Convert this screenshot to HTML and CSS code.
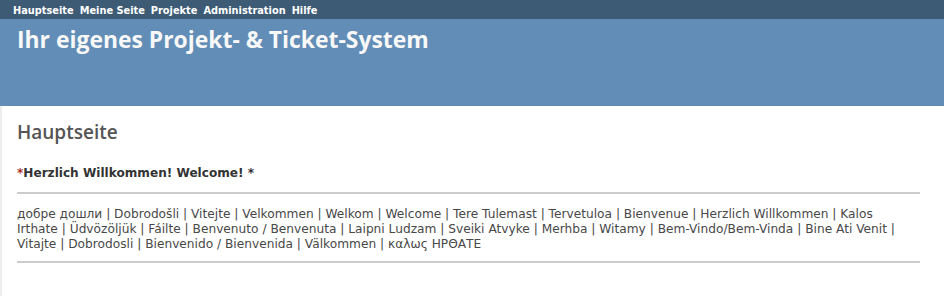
FILE: index.html
```html
<!DOCTYPE html>
<html lang="de">
<head>
<meta charset="utf-8">
<title>Hauptseite</title>
<link rel="stylesheet" href="styles.css">
</head>
<body>
<div class="top-menu">
  <ul class="menu">
    <li><a href="#">Hauptseite</a></li>
    <li><a href="#">Meine Seite</a></li>
    <li><a href="#">Projekte</a></li>
    <li><a href="#">Administration</a></li>
    <li><a href="#">Hilfe</a></li>
  </ul>
</div>
<div class="header">
  <h1 class="site-title">Ihr eigenes Projekt- &amp; Ticket-System</h1>
</div>
<div class="main">
  <div class="content">
    <h2 class="page-title">Hauptseite</h2>
    <div class="wiki">
      <p class="welcome"><span class="star">*</span>Herzlich Willkommen! Welcome! *</p>
      <hr class="rule">
      <p class="langs">добре дошли | Dobrodošli | Vitejte | Velkommen | Welkom | Welcome | Tere Tulemast | Tervetuloa | Bienvenue | Herzlich Willkommen | Kalos Irthate | Üdvözöljük | Fáilte | Benvenuto / Benvenuta | Laipni Ludzam | Sveiki Atvyke | Merhba | Witamy | Bem-Vindo/Bem-Vinda | Bine Ati Venit | Vitajte | Dobrodosli | Bienvenido / Bienvenida | Välkommen | καλως ΗΡΘΑΤΕ</p>
      <hr class="rule rule-end">
    </div>
  </div>
</div>
</body>
</html>
```
FILE: styles.css
```css
html, body {
  margin: 0;
  padding: 0;
  background: #fff;
}
body {
  font-family: Verdana, "DejaVu Sans", sans-serif;
  font-size: 12px;
  color: #484848;
}
.top-menu {
  background: #3E5B76;
  height: 19px;
  padding: 0 6px 0 13px;
  box-sizing: border-box;
}
.menu {
  list-style: none;
  margin: 0;
  padding: 0;
  display: flex;
  gap: 6px;
  height: 19px;
  align-items: center;
}
.menu a {
  color: #fff;
  text-decoration: none;
  font-weight: bold;
  font-size: 9.8px;
}
.header {
  background: #628DB6;
  height: 87px;
  box-sizing: border-box;
  padding: 7px 8px 0 17px;
}
.site-title {
  margin: 0;
  color: #f8f8f8;
  font-family: "Trebuchet MS", "Open Sans", sans-serif;
  font-size: 22.9px;
  font-weight: 700;
  line-height: 28px;
}
.main {
  background: #eee;
  padding-left: 2px;
}
.content {
  background: #fff;
  padding: 14px 24px 20px 15px;
  min-height: 170px;
}
.page-title {
  margin: 0 0 21px;
  font-family: "Trebuchet MS", "Open Sans", sans-serif;
  font-size: 19px;
  font-weight: 600;
  color: #555;
  line-height: 24px;
}
.wiki p {
  margin: 0;
}
.welcome {
  font-weight: bold;
  color: #333;
  line-height: 16px;
  font-size: 12.1px;
}
.star {
  color: #a33;
}
.rule {
  border: 0;
  border-top: 2px solid #ccc;
  margin: 11px 0 13px;
  height: 0;
}
.rule-end {
  margin-top: 9px;
}
.wiki .langs {
  line-height: 15px;
  font-size: 12.2px;
  margin-right: 8px;
}
```
